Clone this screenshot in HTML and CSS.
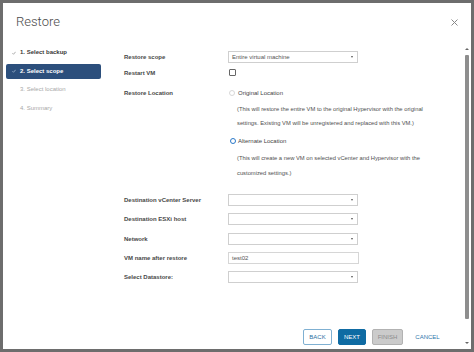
FILE: index.html
```html
<!DOCTYPE html>
<html>
<head>
<meta charset="utf-8">
<link rel="stylesheet" href="styles.css">
</head>
<body>
<div class="dialog">
  <div class="main">
    <header class="head">
      <h1 class="title">Restore</h1>
      <svg class="close" width="7" height="7" viewBox="0 0 7 7"><path d="M0.5 0.5L6.5 6.5M6.5 0.5L0.5 6.5" stroke="#888" stroke-width="1"/></svg>
    </header>
    <div class="body">
      <nav class="steps">
        <div class="step done"><svg class="check" width="4" height="4" viewBox="0 0 4 4"><path d="M0.4 2.2L1.5 3.3L3.6 0.8" fill="none" stroke="#999" stroke-width="0.8"/></svg>1. Select backup</div>
        <div class="step active"><svg class="check" width="4" height="4" viewBox="0 0 4 4"><path d="M0.4 2.2L1.5 3.3L3.6 0.8" fill="none" stroke="#9fb6d0" stroke-width="0.8"/></svg>2. Select scope</div>
        <div class="step todo">3. Select location</div>
        <div class="step todo">4. Summary</div>
      </nav>
      <div class="form">
        <div class="row r-scope">
          <span class="label">Restore scope</span>
          <div class="select">Entire virtual machine<span class="caret"></span></div>
        </div>
        <div class="row r-restart">
          <span class="label">Restart VM</span>
          <span class="checkbox"></span>
        </div>
        <div class="row r-loc">
          <span class="label">Restore Location</span>
          <div class="options">
            <div class="radio-line"><span class="radio"></span>Original Location</div>
            <p class="desc d-first">(This will restore the entire VM to the original Hypervisor with the original<br>settings. Existing VM will be unregistered and replaced with this VM.)</p>
            <div class="radio-line alt"><span class="radio on"></span>Alternate Location</div>
            <p class="desc d-second">(This will create a new VM on selected vCenter and Hypervisor with the<br>customized settings.)</p>
          </div>
        </div>
        <div class="dest">
          <div class="row">
            <span class="label">Destination vCenter Server</span>
            <div class="select"><span class="caret"></span></div>
          </div>
          <div class="row">
            <span class="label">Destination ESXi host</span>
            <div class="select"><span class="caret"></span></div>
          </div>
          <div class="row">
            <span class="label">Network</span>
            <div class="select"><span class="caret"></span></div>
          </div>
          <div class="row">
            <span class="label">VM name after restore</span>
            <div class="input">test02</div>
          </div>
          <div class="row">
            <span class="label">Select Datastore:</span>
            <div class="select"><span class="caret"></span></div>
          </div>
        </div>
      </div>
    </div>
    <footer class="foot">
      <button class="btn back">BACK</button>
      <button class="btn next">NEXT</button>
      <button class="btn finish">FINISH</button>
      <button class="btn cancel">CANCEL</button>
    </footer>
  </div>
  <div class="scrollbar">
    <span class="arrow up"></span>
    <span class="thumb"></span>
    <span class="arrow down"></span>
  </div>
</div>
</body>
</html>
```

FILE: styles.css
```css
html, body {
  margin: 0;
  padding: 0;
}
body {
  width: 474px;
  height: 352px;
  background: #6d6d6d;
  overflow: hidden;
  font-family: "Liberation Sans", Arial, sans-serif;
  color: #333;
}
.dialog {
  margin: 3px 3px 0 3px;
  height: 346px;
  background: #fff;
  display: flex;
}
.main {
  flex: 1;
  display: flex;
  flex-direction: column;
}
.head {
  height: 42px;
  box-sizing: border-box;
  padding: 11px 6px 0 13px;
  display: flex;
  justify-content: space-between;
  align-items: flex-start;
}
.title {
  margin: 0;
  font-family: Roboto, "Liberation Sans", sans-serif;
  font-weight: 300;
  font-size: 13px;
  line-height: 16px;
  color: #4a4a4a;
}
.close {
  margin-top: 5px;
}
.body {
  flex: 1;
  display: flex;
}
.steps {
  width: 98px;
  padding-left: 3px;
  display: flex;
  flex-direction: column;
  gap: 3.6px;
}
.step {
  height: 15px;
  line-height: 15px;
  font-size: 6px;
  font-weight: bold;
  padding-left: 14px;
  position: relative;
  border-radius: 2px;
}
.step .check {
  position: absolute;
  left: 6px;
  top: 5.5px;
}
.step.done { color: #3a3a3a; }
.step.active {
  background: #2c4f7c;
  color: #fff;
  width: 81px;
}
.step.todo { color: #a8a8a8; font-weight: normal; }
.form {
  padding: 6px 0 0 20px;
  display: flex;
  flex-direction: column;
}
.row {
  display: flex;
  align-items: flex-start;
  min-height: 12px;
}
.label {
  width: 104px;
  flex: none;
  font-size: 6px;
  font-weight: bold;
  line-height: 12px;
  color: #484848;
}
.r-restart { margin-top: 4px; }
.r-loc { margin-top: 8px; }
.select, .input {
  width: 130px;
  height: 12px;
  box-sizing: border-box;
  border: 1px solid #cfcfcf;
  font-size: 6px;
  line-height: 10px;
  padding-left: 3px;
  color: #555;
  position: relative;
}
.input { width: 131px; border-color: #d6d6d6; }
.caret {
  position: absolute;
  right: 4px;
  top: 4px;
  width: 0;
  height: 0;
  border-left: 1.5px solid transparent;
  border-right: 1.5px solid transparent;
  border-top: 2px solid #555;
}
.checkbox {
  width: 7px;
  height: 7px;
  box-sizing: border-box;
  border: 1px solid #666;
  border-radius: 1px;
  margin: 2px 0 0 1px;
}
.options {
  display: flex;
  flex-direction: column;
}
.radio-line {
  height: 12px;
  line-height: 12px;
  font-size: 6px;
  color: #444;
  display: flex;
  align-items: center;
}
.radio {
  width: 6px;
  height: 6px;
  box-sizing: border-box;
  border-radius: 50%;
  border: 1px solid #d8d8d8;
  margin: 0 3px 0 1px;
}
.radio.on {
  border: 1.8px solid #2a78c8;
  margin-left: 2px;
  margin-right: 2px;
}
.desc {
  margin: 0;
  padding-left: 9px;
  font-size: 5.8px;
  line-height: 14.5px;
  color: #505050;
  white-space: nowrap;
}
.d-first { margin-top: 2.75px; }
.alt { margin-top: 4.25px; }
.d-second { margin-top: 4px; }
.dest {
  margin-top: 14px;
  display: flex;
  flex-direction: column;
  gap: 7.25px;
}
.foot {
  height: 22px;
  box-sizing: border-box;
  padding: 0 18px 4px 0;
  display: flex;
  justify-content: flex-end;
  align-items: flex-end;
  gap: 6px;
}
.btn {
  height: 16px;
  box-sizing: border-box;
  margin: 0;
  padding: 0;
  border-radius: 2px;
  font-family: "Liberation Sans", Arial, sans-serif;
  font-size: 6px;
  line-height: 14px;
  text-align: center;
}
.back {
  width: 29px;
  background: #fff;
  border: 1px solid #7fb0d2;
  color: #2a6f9f;
}
.next {
  width: 28px;
  background: #0f6ba3;
  border: 1px solid #0f6ba3;
  color: #fff;
}
.finish {
  width: 31px;
  background: #cbcbcb;
  border: 1px solid #b2b2b2;
  color: #8c8c8c;
}
.cancel {
  width: 37px;
  background: transparent;
  border: 0;
  color: #2f78ac;
}
.scrollbar {
  width: 5px;
  margin-right: 2px;
  display: flex;
  flex-direction: column;
  align-items: center;
  padding-top: 45px;
}
.arrow {
  width: 0;
  height: 0;
  border-left: 2px solid transparent;
  border-right: 2px solid transparent;
}
.arrow.up { border-bottom: 2.5px solid #666; }
.arrow.down { border-top: 2.5px solid #666; margin-top: 23px; }
.thumb {
  width: 4px;
  height: 264px;
  margin-top: 5px;
  background: #8e8e8e;
  border-radius: 1px;
}
```
